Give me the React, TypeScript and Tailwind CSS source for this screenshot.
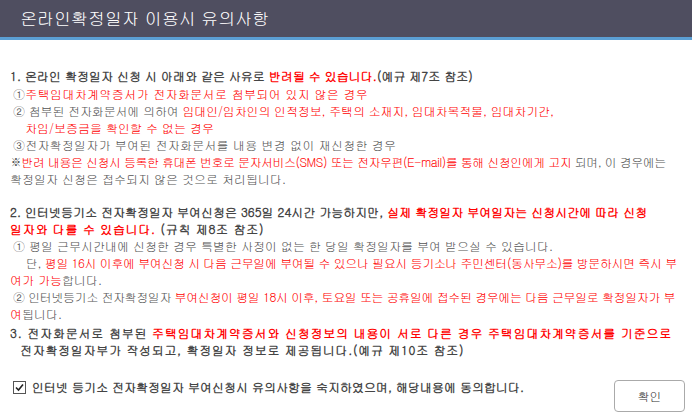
import { useState } from "react";

const R = ({ children }: { children: React.ReactNode }) => <span className="text-[#ff0000]">{children}</span>;

function Line({ className = "", children }: { className?: string; children: React.ReactNode }) {
  return <div className={`h-[17px] overflow-visible leading-[17px] whitespace-nowrap ${className}`}>{children}</div>;
}

export default function App() {
  const [agreed, setAgreed] = useState(true);

  return (
    <div className="h-[415px] w-[692px] overflow-hidden bg-white font-['Gulim','Noto_Sans_CJK_KR',sans-serif] text-[#555]">
      <div className="flex h-[37px] items-center bg-[#4f4e60] px-[20px] text-[17px] text-white">
        온라인확정일자 이용시 유의사항
      </div>
      <div className="h-[3px] bg-[#5b9fd4]" />

      <div className="px-[10px] pt-[27px] text-[12px]">
        <Line className="font-bold text-[#444]">
          1. 온라인 확정일자 신청 시 아래와 같은 사유로 <R>반려될 수 있습니다.</R>(예규 제7조 참조)
        </Line>
        <Line className="mt-[1px] pl-[3px] tracking-[0.35px]">
          ①<R>주택임대차계약증서가 전자화문서로 첨부되어 있지 않은 경우</R>
        </Line>
        <Line className="pl-[3px] tracking-[-0.15px]">
          ② 첨부된 전자화문서에 의하여 <R>임대인/임차인의 인적정보, 주택의 소재지, 임대차목적물, 임대차기간,</R>
        </Line>
        <Line className="pl-[15px]">
          <R>차임/보증금을 확인할 수 없는 경우</R>
        </Line>
        <Line className="pl-[3px] tracking-[0.2px]">③전자확정일자가 부여된 전자화문서를 내용 변경 없이 재신청한 경우</Line>
        <Line className="tracking-[-0.5px]">
          ※<R>반려 내용은 신청시 등록한 휴대폰 번호로 문자서비스(SMS) 또는 전자우편(E-mail)를 통해 신청인에게 고지</R> 되며, 이 경우에는
        </Line>
        <Line>확정일자 신청은 접수되지 않은 것으로 처리됩니다.</Line>

        <Line className="mt-[16px] font-bold text-[#444]">
          2. 인터넷등기소 전자확정일자 부여신청은 365일 24시간 가능하지만, <R>실제 확정일자 부여일자는 신청시간에 따라 신청</R>
        </Line>
        <Line className="font-bold tracking-[0.7px] text-[#444]">
          <R>일자와 다를 수 있습니다.</R> (규칙 제8조 참조)
        </Line>
        <Line className="pl-[3px]">① 평일 근무시간내에 신청한 경우 특별한 사정이 없는 한 당일 확정일자를 부여 받으실 수 있습니다.</Line>
        <Line className="pl-[16px] tracking-[-0.4px]">
          단, <R>평일 16시 이후에 부여신청 시 다음 근무일에 부여될 수 있으나 필요시 등기소나 주민센터(동사무소)를 방문하시면 즉시 부</R>
        </Line>
        <Line>
          <R>여가 가능</R>합니다.
        </Line>
        <Line className="pl-[3px] tracking-[-0.4px]">
          ② 인터넷등기소 전자확정일자 <R>부여신청이 평일 18시 이후, 토요일 또는 공휴일에 접수된 경우에는 다음 근무일로 확정일자가 부</R>
        </Line>
        <Line>
          <R>여</R>됩니다.
        </Line>
        <Line className="mt-[2px] font-bold tracking-[0.8px] text-[#444]">
          3. 전자화문서로 첨부된 <R>주택임대차계약증서와 신청정보의 내용이 서로 다른 경우 주택임대차계약증서를 기준으로</R>
        </Line>
        <Line className="pl-[10px] font-bold tracking-[0.7px] text-[#444]">
          전자확정일자부가 작성되고, 확정일자 정보로 제공됩니다.(예규 제10조 참조)
        </Line>
      </div>

      <div className="mt-[22px] flex h-[32px] items-center justify-between pl-[13px] pr-[7px]">
        <label className="mb-[18px] flex items-center gap-[6px] text-[12px] font-bold text-[#444]">
          <span
            onClick={() => setAgreed(!agreed)}
            className="flex h-[13px] w-[13px] items-center justify-center border border-[#555] bg-white"
          >
            {agreed && (
              <svg width="9" height="9" viewBox="0 0 9 9">
                <path d="M1 4.5 L3.5 7 L8 1.5" fill="none" stroke="#222" strokeWidth="1.6" />
              </svg>
            )}
          </span>
          인터넷 등기소 전자확정일자 부여신청시 유의사항을 숙지하였으며, 해당내용에 동의합니다.
        </label>
        <button
          type="button"
          className="h-[32px] w-[71px] rounded-[4px] border border-[#aaa] bg-white text-[12px] text-[#333]"
        >
          확인
        </button>
      </div>
    </div>
  );
}
